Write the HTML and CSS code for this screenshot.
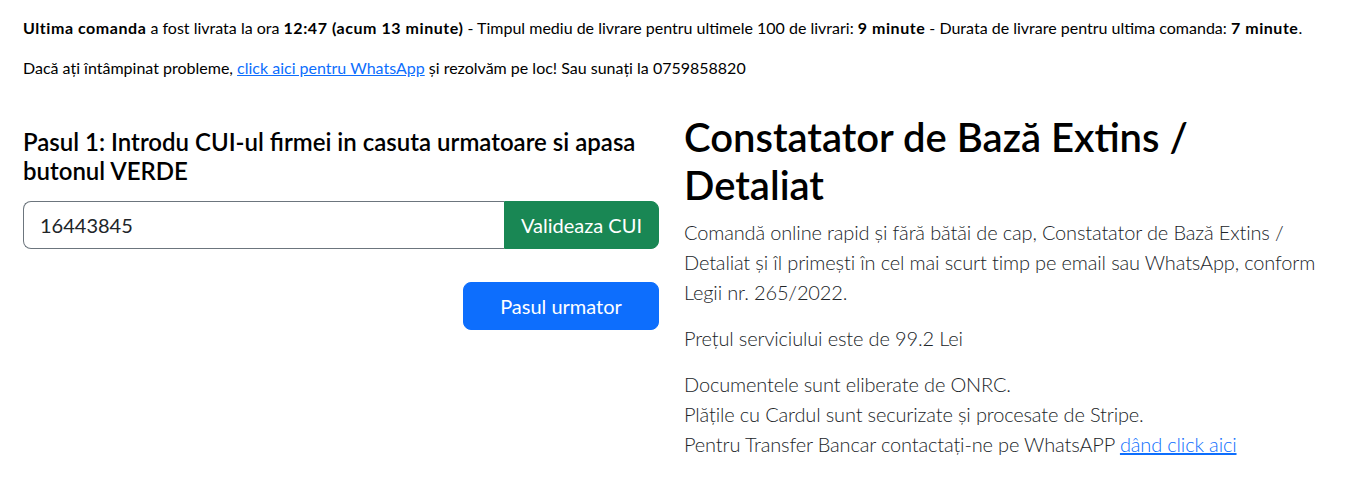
FILE: index.html
```html
<!DOCTYPE html>
<html lang="ro">
<head>
<meta charset="utf-8">
<title>Constatator de Bază Extins / Detaliat</title>
<link rel="stylesheet" href="styles.css">
</head>
<body>
<div class="page">
  <p class="info"><strong>Ultima comanda</strong> a fost livrata la ora <strong>12:47 (acum 13 minute)</strong> - Timpul mediu de livrare pentru ultimele 100 de livrari: <strong>9 minute</strong> - Durata de livrare pentru ultima comanda: <strong>7 minute</strong>.</p>
  <p class="info">Dacă ați întâmpinat probleme, <a href="#">click aici pentru WhatsApp</a> și rezolvăm pe loc! Sau sunați la 0759858820</p>

  <div class="row">
    <div class="col-left">
      <h4 class="step-title">Pasul 1: Introdu CUI-ul firmei in casuta urmatoare si apasa butonul VERDE</h4>
      <div class="input-group">
        <input class="cui-input" type="text" value="16443845">
        <button class="btn btn-success" type="button">Valideaza CUI</button>
      </div>
      <div class="actions">
        <button class="btn btn-primary" type="button">Pasul urmator</button>
      </div>
    </div>
    <div class="col-right">
      <h1 class="title">Constatator de Bază Extins / Detaliat</h1>
      <p class="lead">Comandă online rapid și fără bătăi de cap, Constatator de Bază Extins / Detaliat și îl primești în cel mai scurt timp pe email sau WhatsApp, conform Legii nr. 265/2022.</p>
      <p class="lead">Prețul serviciului este de 99.2 Lei</p>
      <p class="lead">Documentele sunt eliberate de ONRC.<br>Plățile cu Cardul sunt securizate și procesate de Stripe.<br>Pentru Transfer Bancar contactați-ne pe WhatsAPP <a href="#">dând click aici</a></p>
    </div>
  </div>
</div>
</body>
</html>
```

FILE: styles.css
```css
* { box-sizing: border-box; }
html, body { margin: 0; padding: 0; background: #fff; }
body {
  font-family: "Lato", "Noto Sans", sans-serif;
  color: #212529;
  font-size: 16px;
  line-height: 1.5;
}
.page {
  padding: 16px 23px 0 23px;
}
.info {
  font-size: 16px;
  line-height: 24px;
  margin: 0 0 16px 0;
  color: #000;
}
.info strong { font-weight: 700; letter-spacing: 0.55px; }
a { color: #0d6efd; text-decoration: underline; }

.row {
  display: grid;
  grid-template-columns: 636px 636px;
  column-gap: 25px;
  padding-top: 17px;
}
.col-left { padding-top: 14px; }
.step-title {
  font-size: 24px;
  font-weight: 600;
  line-height: 29px;
  margin: 0 0 16px 0;
  color: #000;
}
.input-group {
  display: flex;
  height: 48px;
}
.cui-input {
  flex: 1;
  min-width: 0;
  height: 48px;
  border: 1px solid #6c757d;
  border-right: none;
  border-radius: 8px 0 0 8px;
  padding: 8px 16px;
  font-family: inherit;
  font-size: 20px;
  color: #212529;
  outline: none;
}
.btn {
  font-family: inherit;
  font-size: 20px;
  line-height: 30px;
  padding: 8px 16px;
  border: 1px solid transparent;
  color: #fff;
  cursor: pointer;
}
.btn-success {
  background: #198754;
  border-color: #198754;
  border-radius: 0 8px 8px 0;
}
.actions {
  display: flex;
  justify-content: flex-end;
  margin-top: 33px;
}
.btn-primary {
  background: #0d6efd;
  border-color: #0d6efd;
  border-radius: 8px;
  width: 196px;
  height: 48px;
}
.title {
  font-size: 40px;
  font-weight: 600;
  line-height: 48px;
  margin: 0 0 8px 0;
  color: #000;
}
.lead {
  font-size: 20px;
  font-weight: 300;
  line-height: 30px;
  letter-spacing: -0.15px;
  margin: 0 0 16px 0;
}
```
